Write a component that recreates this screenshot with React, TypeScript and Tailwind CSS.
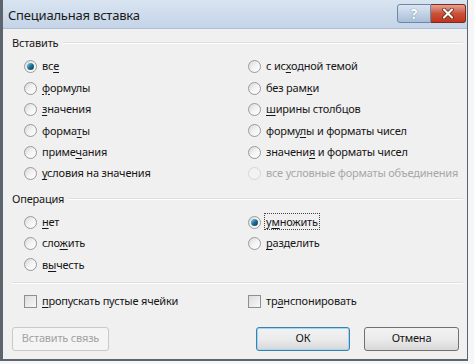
import React from "react";

type Opt = { pre: string; u?: string; post?: string; checked?: boolean; disabled?: boolean; focus?: boolean };

const pasteLeft: Opt[] = [
  { pre: "вс", u: "е", post: "", checked: true },
  { pre: "", u: "ф", post: "ормулы" },
  { pre: "", u: "з", post: "начения" },
  { pre: "форма", u: "т", post: "ы" },
  { pre: "приме", u: "ч", post: "ания" },
  { pre: "", u: "у", post: "словия на значения" },
];

const pasteRight: Opt[] = [
  { pre: "с ис", u: "х", post: "одной темой" },
  { pre: "без рам", u: "к", post: "и" },
  { pre: "", u: "ш", post: "ирины столбцов" },
  { pre: "форму", u: "л", post: "ы и форматы чисел" },
  { pre: "значени", u: "я", post: " и форматы чисел" },
  { pre: "все условные форматы объединения", disabled: true },
];

const opLeft: Opt[] = [
  { pre: "", u: "н", post: "ет" },
  { pre: "сло", u: "ж", post: "ить" },
  { pre: "в", u: "ы", post: "честь" },
];

const opRight: Opt[] = [
  { pre: "у", u: "м", post: "ножить", checked: true, focus: true },
  { pre: "", u: "р", post: "азделить" },
];

function Label({ o }: { o: Opt }) {
  return (
    <span
      className={`whitespace-nowrap leading-[16px] px-[1px] ${o.disabled ? "text-[#a7a7a7]" : "text-[#161616]"} ${
        o.focus ? "outline outline-1 outline-dotted outline-[#444] outline-offset-0" : ""
      }`}
    >
      {o.pre}
      {o.u && <span className="underline underline-offset-2">{o.u}</span>}
      {o.post}
    </span>
  );
}

function Radio({ o }: { o: Opt }) {
  return (
    <div className="flex items-center h-[21.4px]">
      <span
        className={`shrink-0 w-[13px] h-[13px] rounded-full border flex items-center justify-center ${
          o.disabled
            ? "border-[#d6d6d6] bg-[#f2f2f2]"
            : "border-[#9a9a9a] bg-gradient-to-br from-[#d9d9d9] via-[#f3f3f3] to-[#ffffff]"
        }`}
      >
        {o.checked && (
          <span className="w-[7px] h-[7px] rounded-full bg-gradient-to-br from-[#8fd0ea] via-[#1f6f98] to-[#0b3a55]" />
        )}
      </span>
      <span className="ml-[4px]">
        <Label o={o} />
      </span>
    </div>
  );
}

function Check({ pre, u, post }: { pre: string; u: string; post: string }) {
  return (
    <div className="flex items-center h-[20px]">
      <span className="shrink-0 w-[13px] h-[13px] border border-[#8e8f8f] bg-gradient-to-br from-[#dcdcdc] to-[#f8f8f8]" />
      <span className="ml-[5px] whitespace-nowrap text-[#161616]">
        {pre}
        <span className="underline underline-offset-2">{u}</span>
        {post}
      </span>
    </div>
  );
}

function GroupTitle({ text }: { text: string }) {
  return (
    <div className="flex items-center h-[16px]">
      <span className="text-[#161616]">{text}</span>
      <span className="flex-1 ml-[5px] border-t border-[#dcdfe3] border-b border-b-white" />
    </div>
  );
}

export default function App() {
  return (
    <div
      className="w-[474px] h-[364px] bg-[#f4f6f8] overflow-hidden text-[11px] tracking-[-0.2px]"
      style={{ fontFamily: '"Noto Sans", "Open Sans", sans-serif' }}
    >
      <div className="w-[468px] h-[361px] border-l-[3px] border-r border-b-2 border-[#5d646b] bg-[#f0f0f0] flex flex-col">
        {/* title bar */}
        <div className="h-[29px] flex items-start bg-gradient-to-b from-[#d9e4f1] to-[#c4d4e7] border-b border-[#aebfd3]">
          <span className="ml-[5px] mt-[5px] text-[13px] tracking-[-0.2px] leading-[20px] text-[#1a1a1a]">
            Специальная вставка
          </span>
          <div className="ml-auto mt-[4px] mr-[1px] flex">
            <div className="w-[34px] h-[19px] rounded-l-[3px] border border-[#6d87a6] bg-gradient-to-b from-[#dce6f2] to-[#a9bfd8] flex items-center justify-center text-white text-[14px] font-bold leading-none [text-shadow:0_0_1px_#3b5874]">
              ?
            </div>
            <div className="w-[35px] h-[19px] rounded-r-[3px] border border-l-0 border-[#7a2a1e] bg-gradient-to-b from-[#e5a493] via-[#c9503a] to-[#c2331a] flex items-center justify-center">
              <svg width="12" height="11" viewBox="0 0 12 11">
                <path d="M2 1.5 L10 9.5 M10 1.5 L2 9.5" stroke="#5a1a10" strokeWidth="3.6" strokeLinecap="round" />
                <path d="M2 1.5 L10 9.5 M10 1.5 L2 9.5" stroke="#ffffff" strokeWidth="2.2" strokeLinecap="round" />
              </svg>
            </div>
          </div>
        </div>

        {/* body */}
        <div className="flex-1 pl-[9px] pr-[4px] pt-[6px]">
          <GroupTitle text="Вставить" />
          <div className="grid grid-cols-[224px_1fr] mt-[5px] pl-[12px]">
            <div className="flex flex-col">
              {pasteLeft.map((o, i) => (
                <Radio key={i} o={o} />
              ))}
            </div>
            <div className="flex flex-col">
              {pasteRight.map((o, i) => (
                <Radio key={i} o={o} />
              ))}
            </div>
          </div>

          <div className="mt-[7px]">
            <GroupTitle text="Операция" />
          </div>
          <div className="grid grid-cols-[224px_1fr] mt-[4px] pl-[12px]">
            <div className="flex flex-col">
              {opLeft.map((o, i) => (
                <Radio key={i} o={o} />
              ))}
            </div>
            <div className="flex flex-col">
              {opRight.map((o, i) => (
                <Radio key={i} o={o} />
              ))}
            </div>
          </div>

          <div className="mt-[6px] border-t border-[#dcdfe3] border-b border-b-white" />

          <div className="grid grid-cols-[224px_1fr] mt-[8px] pl-[12px]">
            <Check pre="" u="п" post="ропускать пустые ячейки" />
            <Check pre="тр" u="а" post="нспонировать" />
          </div>

          <div className="flex mt-[15px]">
            <button className="w-[97px] h-[24px] border border-[#c9c9c9] rounded-[3px] bg-[#f4f4f4] text-[#a3a3a3]">
              Вставить связь
            </button>
            <button className="ml-[147px] w-[94px] h-[24px] border border-[#3c7fb1] rounded-[3px] bg-gradient-to-b from-[#f2f2f2] via-[#ebebeb] to-[#d8d8d8] shadow-[inset_0_0_0_1px_#9ed8f5] text-[#161616]">
              ОК
            </button>
            <button className="ml-[14px] w-[95px] h-[24px] border border-[#707070] rounded-[3px] bg-gradient-to-b from-[#f2f2f2] via-[#ebebeb] to-[#d8d8d8] text-[#161616]">
              Отмена
            </button>
          </div>
        </div>
      </div>
    </div>
  );
}
